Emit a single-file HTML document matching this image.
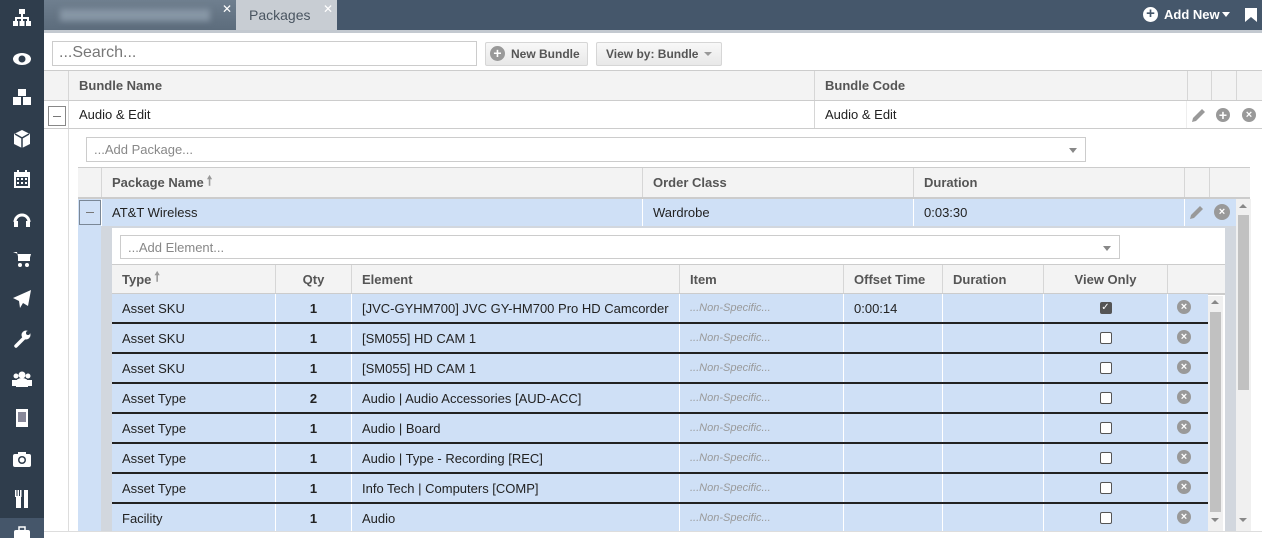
<!DOCTYPE html><html><head><meta charset="utf-8"><style>
*{box-sizing:border-box;margin:0;padding:0}
body{width:1262px;height:538px;overflow:hidden;background:#fff;font-family:"Liberation Sans",Arial,sans-serif;font-size:13px;color:#222;position:relative}
.a{position:absolute}
.sb{left:0;top:0;width:44px;height:538px;background:#2f3d4c;z-index:5}
.ic{position:absolute;left:12px;width:20px;height:20px}
.top{left:44px;top:0;width:1218px;height:30px;background:#45576b}
.strip{left:44px;top:30px;width:1218px;height:3px;background:#c3c9d0}
.hdr{background:#f3f3f3;color:#555;font-weight:bold}
.cell{position:absolute;top:0;height:100%;border-left:1px solid #d6d6d6;padding-left:10px;display:flex;align-items:center;white-space:nowrap}
.blue{background:#cfe0f6}
.sel{border:1px solid #ccc;background:#fff;color:#888;padding-left:7px;display:flex;align-items:center}
.car{position:absolute;right:8px;top:10px;border:4px solid transparent;border-top:5px solid #888;border-bottom:0}
.ns{color:#999;font-style:italic;font-size:11px}
.x{width:14px;height:14px;border-radius:50%;background:#999;color:#fff;font-size:11px;line-height:14px;text-align:center;font-weight:bold}
.cb{width:12px;height:12px;border:1px solid #555;background:#fff;border-radius:2px}
</style></head><body>
<div class="a sb">
<svg class="ic" style="top:8px" viewBox="0 0 20 20" fill="#fff"><rect x="7" y="1" width="6" height="5"/><rect x="9" y="6" width="2" height="4"/><rect x="3" y="9" width="14" height="2"/><rect x="3" y="9" width="2" height="4"/><rect x="15" y="9" width="2" height="4"/><rect x="9" y="9" width="2" height="4"/><rect x="1" y="13" width="5" height="5"/><rect x="7.5" y="13" width="5" height="5"/><rect x="14" y="13" width="5" height="5"/></svg>
<svg class="ic" style="top:49px" viewBox="0 0 20 20"><ellipse cx="10" cy="10" rx="9" ry="6" fill="#fff"/><circle cx="10" cy="10" r="3.5" fill="#2f3d4c"/></svg>
<svg class="ic" style="top:88px" viewBox="0 0 20 20" fill="#fff"><rect x="6" y="1" width="8" height="7"/><rect x="1" y="9" width="8" height="8"/><rect x="11" y="9" width="8" height="8"/></svg>
<svg class="ic" style="top:129px" viewBox="0 0 20 20" fill="#fff"><path d="M10 1l8 4v10l-8 4-8-4V5z"/><path d="M3 5l7 4 7-4M10 9v10" stroke="#2f3d4c" fill="none" stroke-width="1.5"/></svg>
<svg class="ic" style="top:169px" viewBox="0 0 20 20" fill="#fff"><rect x="2" y="3" width="16" height="16"/><rect x="4" y="8" width="12" height="9" fill="#2f3d4c"/><rect x="5" y="1" width="2" height="4"/><rect x="13" y="1" width="2" height="4"/><g fill="#fff"><rect x="5" y="9" width="2" height="2"/><rect x="9" y="9" width="2" height="2"/><rect x="13" y="9" width="2" height="2"/><rect x="5" y="13" width="2" height="2"/><rect x="9" y="13" width="2" height="2"/><rect x="13" y="13" width="2" height="2"/></g></svg>
<svg class="ic" style="top:209px" viewBox="0 0 20 20"><path d="M3 13a7 7 0 0 1 14 0" stroke="#fff" stroke-width="3" fill="none"/><rect x="2" y="12" width="4" height="6" fill="#fff"/><rect x="14" y="12" width="4" height="6" fill="#fff"/></svg>
<svg class="ic" style="top:249px" viewBox="0 0 20 20" fill="#fff"><path d="M1 3h4l2 9h10l2-7H6" /><rect x="6" y="5" width="12" height="7"/><circle cx="8" cy="16" r="2"/><circle cx="15" cy="16" r="2"/></svg>
<svg class="ic" style="top:289px" viewBox="0 0 20 20" fill="#fff"><path d="M19 1L1 9l6 3 1 7 3-5 5 3z"/></svg>
<svg class="ic" style="top:329px" viewBox="0 0 20 20"><path d="M4 17l8-8" stroke="#fff" stroke-width="3.5" stroke-linecap="round"/><circle cx="14" cy="6" r="4.5" fill="#fff"/><circle cx="16" cy="4" r="2" fill="#2f3d4c"/></svg>
<svg class="ic" style="top:369px" viewBox="0 0 20 20" fill="#fff"><circle cx="10" cy="6" r="3.5"/><circle cx="4" cy="7" r="2.5"/><circle cx="16" cy="7" r="2.5"/><path d="M4 18v-5a6 4 0 0 1 12 0v5z"/><rect x="0" y="11" width="5" height="6"/><rect x="15" y="11" width="5" height="6"/></svg>
<svg class="ic" style="top:408px" viewBox="0 0 20 20"><rect x="4" y="1" width="12" height="18" fill="#fff"/><g fill="#889"><rect x="6" y="4" width="8" height="10"/></g></svg>
<svg class="ic" style="top:449px" viewBox="0 0 20 20" fill="#fff"><rect x="1" y="5" width="18" height="13" rx="2"/><rect x="6" y="3" width="8" height="3"/><circle cx="10" cy="11" r="4" fill="#2f3d4c"/><circle cx="10" cy="11" r="2.5" fill="#fff"/></svg>
<svg class="ic" style="top:489px" viewBox="0 0 20 20" fill="#fff"><rect x="3" y="1" width="1.5" height="7"/><rect x="5.5" y="1" width="1.5" height="7"/><rect x="8" y="1" width="1.5" height="7"/><rect x="4" y="7" width="5" height="12"/><path d="M12 1h4v18h-4z"/></svg>
<div class="a" style="left:0;top:518px;width:44px;height:20px;background:#45566a"></div>
<svg class="ic" style="top:526px" viewBox="0 0 20 20" fill="#fff"><rect x="2" y="4" width="16" height="14" rx="2"/><rect x="7" y="1" width="6" height="4" fill="none" stroke="#fff" stroke-width="1.5"/></svg>
</div>
<div class="a top"></div>
<div class="a" style="left:44px;top:0;width:192px;height:30px;background:linear-gradient(#6f7f8f,#5c6c7c)"></div>
<div class="a" style="left:60px;top:9px;width:150px;height:12px;background:#8796a5;filter:blur(3px)"></div>
<div class="a" style="left:222px;top:2px;color:#fff;font-size:12px">✕</div>
<div class="a" style="left:236px;top:0;width:101px;height:30px;background:#c8cdd3;color:#4a5561;font-size:14px;padding:7px 0 0 13px">Packages</div>
<div class="a" style="left:323px;top:2px;color:#fff;font-size:12px">✕</div>
<div class="a" style="left:1143px;top:7px;width:15px;height:15px;border-radius:50%;background:#fff;color:#45576b;font-weight:bold;font-size:15px;line-height:14px;text-align:center">+</div>
<div class="a" style="left:1164px;top:7px;color:#fff;font-weight:bold;font-size:13px">Add New</div>
<div class="a" style="left:1222px;top:12px;border:4px solid transparent;border-top:5px solid #fff"></div>
<svg class="a" style="left:1245px;top:8px" width="12" height="14" viewBox="0 0 12 14"><path d="M0 0h12v14l-6-5-6 5z" fill="#fff"/></svg>
<div class="a strip"></div>
<div class="a" style="left:52px;top:41px;width:425px;height:25px;border:1px solid #ccc;color:#777;font-size:16px;padding:2px 0 0 6px">...Search...</div>
<div class="a" style="left:485px;top:42px;width:103px;height:24px;border:1px solid #d6d6d6;border-radius:2px;background:linear-gradient(#f8f8f8,#e8e8e8);color:#555;font-weight:bold;font-size:12px;padding:4px 0 0 25px">New Bundle</div>
<div class="a x" style="left:490px;top:46px;width:15px;height:15px;font-size:14px;line-height:15px">+</div>
<div class="a" style="left:596px;top:42px;width:126px;height:24px;border:1px solid #d6d6d6;border-radius:2px;background:linear-gradient(#f8f8f8,#e8e8e8);color:#555;font-weight:bold;font-size:12px;padding:4px 0 0 9px">View by: Bundle</div>
<div class="a" style="left:704px;top:52px;border:4px solid transparent;border-top:4px solid #999"></div>
<div class="a hdr" style="left:44px;top:70px;width:1218px;height:31px;border-top:1px solid #ccc;border-bottom:1px solid #ccc">
<div class="cell" style="left:24px;width:746px;">Bundle Name</div>
<div class="cell" style="left:770px;width:373px;">Bundle Code</div>
<div class="cell" style="left:1143px;width:24px"></div><div class="cell" style="left:1167px;width:25px"></div><div class="cell" style="left:1192px;width:26px"></div>
</div>
<div class="a" style="left:44px;top:101px;width:1218px;height:28px;border-bottom:1px solid #ccc">
<div class="a" style="left:4px;top:5px;width:18px;height:20px;border:1px solid #888;background:#fff"><div class="a" style="left:4px;top:9px;width:8px;height:1px;background:#777"></div></div>
<div class="cell" style="left:24px;width:746px;">Audio &amp; Edit</div>
<div class="cell" style="left:770px;width:373px;border-right:1px solid #eee">Audio &amp; Edit</div>
<svg class="a" style="left:1146px;top:5px" width="18" height="18" viewBox="0 0 18 18"><path d="M2 16l1-4 9-9 3 3-9 9z" fill="#999"/></svg>
<div class="a x" style="left:1172px;top:7px;font-size:14px">+</div>
<div class="a x" style="left:1198px;top:7px">×</div>
</div>
<div class="a" style="left:68px;top:129px;width:1194px;height:409px;border-left:1px solid #ddd"></div>
<div class="a sel" style="left:86px;top:137px;width:1000px;height:25px">...Add Package...<span class="car"></span></div>
<div class="a hdr" style="left:78px;top:167px;width:1172px;height:32px;border-top:1px solid #ccc;border-bottom:2px solid #ccc">
<div class="cell" style="left:23px;width:541px;">Package Name <span style="color:#999;margin-left:3px">🠕</span></div>
<div class="cell" style="left:564px;width:271px;">Order Class</div>
<div class="cell" style="left:835px;width:271px;">Duration</div>
<div class="cell" style="left:1106px;width:25px"></div><div class="cell" style="left:1131px;width:41px"></div>
</div>
<div class="a blue" style="left:78px;top:199px;width:1158px;height:332px"></div>
<div class="a" style="left:78px;top:199px;width:1158px;height:27px">
<div class="a" style="left:1px;top:1px;width:22px;height:25px;border:1px solid #7a8796"><div class="a" style="left:6px;top:11px;width:8px;height:1px;background:#777"></div></div>
<div class="cell" style="left:23px;width:541px;border-color:#fff">AT&amp;T Wireless</div>
<div class="cell" style="left:564px;width:271px;border-color:#fff">Wardrobe</div>
<div class="cell" style="left:835px;width:271px;border-color:#fff">0:03:30</div>
<div class="cell" style="left:1106px;width:25px;border-color:#fff"></div>
<svg class="a" style="left:1110px;top:4px" width="18" height="18" viewBox="0 0 18 18"><path d="M2 16l1-4 9-9 3 3-9 9z" fill="#999"/></svg>
<div class="a x" style="left:1136px;top:5px;width:16px;height:16px;line-height:16px">×</div>
</div>
<div class="a" style="left:101px;top:226px;width:1135px;height:305px;background:#d2d7de"></div>
<div class="a" style="left:112px;top:228px;width:1113px;height:303px;background:#fff"></div>
<div class="a" style="left:1236px;top:199px;width:15px;height:332px;background:#f0f0f0"></div>
<div class="a" style="left:1239px;top:204px;border:4px solid transparent;border-bottom:4px solid #888;border-top:0"></div>
<div class="a" style="left:1238px;top:215px;width:11px;height:175px;background:#c1c1c1"></div>
<div class="a" style="left:1239px;top:518px;border:4px solid transparent;border-top:4px solid #888;border-bottom:0"></div>
<div class="a sel" style="left:120px;top:235px;width:1000px;height:24px">...Add Element...<span class="car"></span></div>
<div class="a hdr" style="left:112px;top:264px;width:1113px;height:31px;border-top:1px solid #ccc;border-bottom:2px solid #ccc">
<div class="cell" style="left:0;width:163px;border:0">Type <span style="color:#999;margin-left:3px">🠕</span></div>
<div class="cell" style="left:163px;width:76px;justify-content:center;padding:0">Qty</div>
<div class="cell" style="left:239px;width:328px;">Element</div>
<div class="cell" style="left:567px;width:164px;">Item</div>
<div class="cell" style="left:731px;width:99px;">Offset Time</div>
<div class="cell" style="left:830px;width:101px;">Duration</div>
<div class="cell" style="left:931px;width:124px;justify-content:center;padding:0">View Only</div>
<div class="cell" style="left:1055px;width:58px"></div>
</div>
<div id="rows"></div>
<div class="a" style="left:1208px;top:296px;width:15px;height:235px;background:#f0f0f0"></div>
<div class="a" style="left:1211px;top:300px;border:4px solid transparent;border-bottom:4px solid #888;border-top:0"></div>
<div class="a" style="left:1210px;top:312px;width:11px;height:200px;background:#c1c1c1"></div>
<div class="a" style="left:1211px;top:518px;border:4px solid transparent;border-top:4px solid #888;border-bottom:0"></div>
<div class="a" style="left:44px;top:531px;width:1218px;height:7px;background:#fff;border-top:1px solid #ddd;z-index:3"></div>
<script>
var d=[["Asset SKU",1,"[JVC-GYHM700] JVC GY-HM700 Pro HD Camcorder","0:00:14",1],["Asset SKU",1,"[SM055] HD CAM 1","",0],["Asset SKU",1,"[SM055] HD CAM 1","",0],["Asset Type",2,"Audio | Audio Accessories [AUD-ACC]","",0],["Asset Type",1,"Audio | Board","",0],["Asset Type",1,"Audio | Type - Recording [REC]","",0],["Asset Type",1,"Info Tech | Computers [COMP]","",0],["Facility",1,"Audio","",0]];
var h="";d.forEach(function(r,i){var t=294+i*30;
h+='<div class="a blue" style="left:112px;top:'+t+'px;width:1096px;height:30px;border-bottom:2px solid #222">'+
'<div class="cell" style="left:0;width:163px;border:0">'+r[0]+'</div>'+
'<div class="cell" style="left:163px;width:76px;justify-content:center;padding:0;font-weight:bold;border-color:#fff">'+r[1]+'</div>'+
'<div class="cell" style="left:239px;width:328px;border-color:#fff">'+r[2]+'</div>'+
'<div class="cell ns" style="left:567px;width:164px;border-color:#fff">...Non-Specific...</div>'+
'<div class="cell" style="left:731px;width:99px;border-color:#fff">'+r[3]+'</div>'+
'<div class="cell" style="left:830px;width:101px;border-color:#fff"></div>'+
'<div class="cell" style="left:931px;width:124px;justify-content:center;padding:0;border-color:#fff">'+(r[4]?'<div class="cb" style="background:#555;color:#fff;font-size:10px;line-height:10px;text-align:center">✓</div>':'<div class="cb"></div>')+'</div>'+
'<div class="cell" style="left:1055px;width:41px;border-color:#fff"></div>'+
'<div class="a x" style="left:1065px;top:6px">×</div></div>';});
document.getElementById("rows").innerHTML=h;
</script>
</body></html>
